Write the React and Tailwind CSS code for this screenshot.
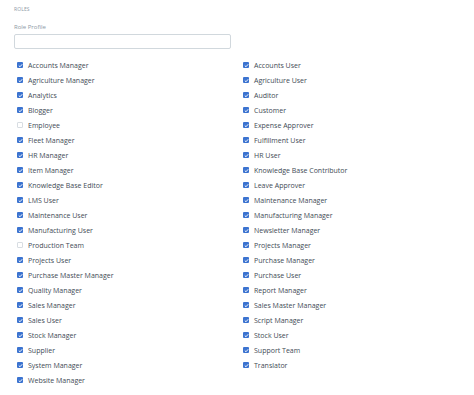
import React from 'react';

const left = [
  ['Accounts Manager', true],
  ['Agriculture Manager', true],
  ['Analytics', true],
  ['Blogger', true],
  ['Employee', false],
  ['Fleet Manager', true],
  ['HR Manager', true],
  ['Item Manager', true],
  ['Knowledge Base Editor', true],
  ['LMS User', true],
  ['Maintenance User', true],
  ['Manufacturing User', true],
  ['Production Team', false],
  ['Projects User', true],
  ['Purchase Master Manager', true],
  ['Quality Manager', true],
  ['Sales Manager', true],
  ['Sales User', true],
  ['Stock Manager', true],
  ['Supplier', true],
  ['System Manager', true],
  ['Website Manager', true],
];

const right = [
  ['Accounts User', true],
  ['Agriculture User', true],
  ['Auditor', true],
  ['Customer', true],
  ['Expense Approver', true],
  ['Fulfillment User', true],
  ['HR User', true],
  ['Knowledge Base Contributor', true],
  ['Leave Approver', true],
  ['Maintenance Manager', true],
  ['Manufacturing Manager', true],
  ['Newsletter Manager', true],
  ['Projects Manager', true],
  ['Purchase Manager', true],
  ['Purchase User', true],
  ['Report Manager', true],
  ['Sales Master Manager', true],
  ['Script Manager', true],
  ['Stock User', true],
  ['Support Team', true],
  ['Translator', true],
];

const Box = ({ checked }) =>
  checked ? (
    <span className="w-[6px] h-[6px] rounded-[1px] bg-[#3b73d0] flex items-center justify-center shrink-0">
      <svg viewBox="0 0 8 8" className="w-[5px] h-[5px]">
        <path d="M1.3 4.2 L3.2 6 L6.7 2" fill="none" stroke="white" strokeWidth="1.5" />
      </svg>
    </span>
  ) : (
    <span className="w-[6px] h-[6px] rounded-[1px] border border-[#d8dde2] bg-white shrink-0" />
  );

const Column = ({ items }) => (
  <div className="flex flex-col">
    {items.map(([label, checked]) => (
      <div key={label} className="h-[15px] flex items-center gap-[5px] pl-[3px]">
        <Box checked={checked} />
        <span className="text-[7px] text-[#424b55] leading-none">{label}</span>
      </div>
    ))}
  </div>
);

export default function App() {
  return (
    <div className="w-[474px] h-[395px] bg-white px-[14px] pt-[6px]" style={{ fontFamily: '"Open Sans", "Noto Sans", sans-serif' }}>
      <div className="text-[5px] text-[#8d99a6] tracking-wide">ROLES</div>
      <div className="text-[6px] text-[#8d99a6] mt-[9px]">Role Profile</div>
      <div className="w-[217px] h-[15px] border border-[#d1d8dd] rounded-[2px] mt-[2px]" />
      <div className="grid grid-cols-[226px_226px] mt-[9px]">
        <Column items={left} />
        <Column items={right} />
      </div>
    </div>
  );
}
